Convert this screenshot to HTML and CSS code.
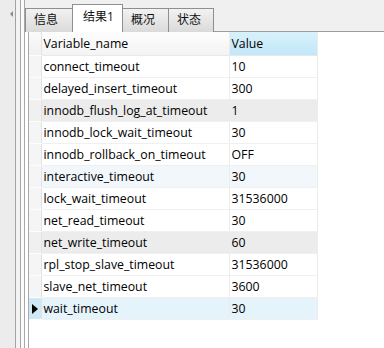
FILE: index.html
```html
<!DOCTYPE html>
<html lang="en">
<head>
    <meta charset="UTF-8">
    <meta name="viewport" content="width=device-width, initial-scale=1.0">
    <title>结果1</title>
    <link rel="stylesheet" href="styles.css">
</head>
<body>
    <div class="window">
        <div class="dock"><span class="dock-arrow"></span></div>
        <div class="strip strip-a"></div>
        <div class="strip strip-b"></div>
        <div class="main">
            <div class="tabs">
                <div class="tab">信息</div>
                <div class="tab active">结果1</div>
                <div class="tab">概况</div>
                <div class="tab">状态</div>
            </div>
            <div class="panel">
                <table class="grid">
                    <thead>
                        <tr>
                            <th class="rowhead"></th>
                            <th class="col-name">Variable_name</th>
                            <th class="col-value sorted">Value</th>
                        </tr>
                    </thead>
                    <tbody>
                        <tr><td class="rowhead"></td><td>connect_timeout</td><td>10</td></tr>
                        <tr><td class="rowhead"></td><td>delayed_insert_timeout</td><td>300</td></tr>
                        <tr class="shade"><td class="rowhead"></td><td>innodb_flush_log_at_timeout</td><td>1</td></tr>
                        <tr><td class="rowhead"></td><td>innodb_lock_wait_timeout</td><td>30</td></tr>
                        <tr><td class="rowhead"></td><td>innodb_rollback_on_timeout</td><td>OFF</td></tr>
                        <tr class="hover"><td class="rowhead"></td><td>interactive_timeout</td><td>30</td></tr>
                        <tr><td class="rowhead"></td><td>lock_wait_timeout</td><td>31536000</td></tr>
                        <tr><td class="rowhead"></td><td>net_read_timeout</td><td>30</td></tr>
                        <tr class="shade"><td class="rowhead"></td><td>net_write_timeout</td><td>60</td></tr>
                        <tr><td class="rowhead"></td><td>rpl_stop_slave_timeout</td><td>31536000</td></tr>
                        <tr><td class="rowhead"></td><td>slave_net_timeout</td><td>3600</td></tr>
                        <tr class="current"><td class="rowhead"><span class="pointer"></span></td><td>wait_timeout</td><td>30</td></tr>
                    </tbody>
                </table>
            </div>
        </div>
    </div>
</body>
</html>
```

FILE: styles.css
```css
html, body {
    margin: 0;
    padding: 0;
    background: #fff;
}
body {
    font-family: 'Open Sans', 'Noto Sans CJK SC', sans-serif;
    font-size: 12px;
    color: #000;
}
.window {
    display: flex;
    width: 384px;
    height: 348px;
    overflow: hidden;
}
.dock {
    width: 15px;
    background: #ececec;
    border-right: 1px solid #a3a3a3;
    position: relative;
}
.dock-arrow {
    position: absolute;
    left: 10px;
    top: 11px;
    border-style: solid;
    border-width: 3px 3px 3px 0;
    border-color: transparent #8a8a8a transparent transparent;
}
.strip {
    border-right: 1px solid #a8a8a8;
}
.strip-a {
    width: 4px;
    background: #f3f3f3;
}
.strip-b {
    width: 3px;
    background: #fbfbfb;
}
.main {
    flex: 1;
    display: flex;
    flex-direction: column;
}
.tabs {
    height: 32px;
    background: #f0f0f0;
    border-bottom: 1px solid #9c9c9c;
    display: flex;
    align-items: flex-end;
    box-sizing: border-box;
}
.tab {
    height: 24px;
    line-height: 22px;
    box-sizing: border-box;
    border: 1px solid #8e8f8f;
    border-bottom: none;
    margin-right: -1px;
    margin-bottom: -1px;
    padding: 0 0 0 8px;
    background: linear-gradient(#f2f2f2, #e6e6e6 50%, #dadada);
    font-size: 12px;
    color: #111;
}
.tab:nth-child(1) { width: 48px; }
.tab:nth-child(2) { width: 51px; }
.tab:nth-child(3) { width: 47px; }
.tab:nth-child(4) { width: 46px; }
.tab.active {
    height: 28px;
    line-height: 24px;
    background: #fff;
    position: relative;
    z-index: 1;
    padding-left: 10px;
}
.panel {
    flex: 1;
    margin-left: 3px;
    border-left: 1px solid #a8a8a8;
}
.grid {
    border-collapse: collapse;
    table-layout: fixed;
    width: 288px;
}
.grid th, .grid td {
    height: 22px;
    padding: 0 0 0 2px;
    text-align: left;
    font-weight: normal;
    white-space: nowrap;
    overflow: hidden;
    box-sizing: border-box;
    border-bottom: 1px solid #f0f0f0;
    border-right: 1px solid #ececec;
    font-size: 12.3px;
}
.grid th {
    height: 23px;
    background: linear-gradient(#fdfdfd, #f3f3f3);
    border-bottom: 1px solid #e8e8e8;
}
.grid .rowhead {
    width: 12px;
    padding: 0;
    background: #f5f5f5;
    border-right: 1px solid #e2e2e2;
    border-bottom: 1px solid #fdfdfd;
}
.grid th.rowhead {
    background: linear-gradient(#fbfbfb, #f0f0f0);
}
.col-name { width: 188px; }
.col-value { width: 88px; }
.grid th.sorted {
    background: linear-gradient(#d8f1fb, #c1e7f8);
}
.shade td {
    background: #ececec;
}
.shade td.rowhead {
    background: #f0f0f0;
}
.hover td {
    background: #f1f7fb;
}
.current td {
    background: #e5f3fb;
}
.current td.rowhead {
    background: #cfe8f5;
    position: relative;
}
.pointer {
    position: absolute;
    left: 3px;
    top: 6px;
    border-style: solid;
    border-width: 5px 0 5px 6px;
    border-color: transparent transparent transparent #000;
}
```
